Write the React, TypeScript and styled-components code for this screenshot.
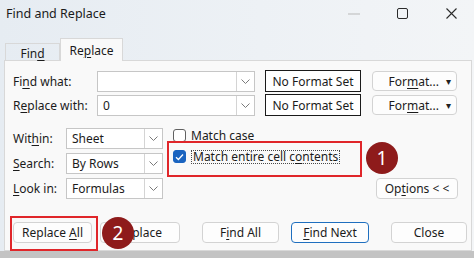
import React from "react";
import styled, { createGlobalStyle } from "styled-components";

const GlobalStyle = createGlobalStyle`
  body {
    margin: 0;
    font-family: "Noto Sans", "Open Sans", sans-serif;
    color: #1b1b1b;
  }
`;

const Chevron = () => (
  <svg width="9" height="5" viewBox="0 0 9 5">
    <polyline points="0.5,0.5 4.5,4.5 8.5,0.5" fill="none" stroke="#7a7a7a" strokeWidth="1" />
  </svg>
);

const Key = ({ children }: { children: React.ReactNode }) => <U>{children}</U>;

const App = () => {
  return (
    <>
      <GlobalStyle />
      <S.Window>
        <S.TitleBar>
          <S.Title>Find and Replace</S.Title>
          <S.Controls>
            <S.ControlButton>
              <svg width="12" height="2" viewBox="0 0 12 2">
                <line x1="0" y1="1" x2="12" y2="1" stroke="#b9b9b9" strokeWidth="1" />
              </svg>
            </S.ControlButton>
            <S.ControlButton>
              <svg width="11" height="11" viewBox="0 0 11 11">
                <rect x="0.5" y="0.5" width="10" height="10" rx="1.5" fill="none" stroke="#2b2b2b" strokeWidth="1" />
              </svg>
            </S.ControlButton>
            <S.ControlButton $shift={3}>
              <svg width="11" height="11" viewBox="0 0 11 11">
                <path d="M0.5 0.5 L10.5 10.5 M10.5 0.5 L0.5 10.5" stroke="#2b2b2b" strokeWidth="1.1" />
              </svg>
            </S.ControlButton>
          </S.Controls>
        </S.TitleBar>

        <S.TabStrip>
          <S.Tab>
            <span>Fin<Key>d</Key></span>
          </S.Tab>
          <S.Tab $active>
            <span>Re<Key>p</Key>lace</span>
          </S.Tab>
        </S.TabStrip>

        <S.Panel>
          <S.FindGrid>
            <S.Label>
              Fi<Key>n</Key>d what:
            </S.Label>
            <S.Combo>
              <S.ComboText></S.ComboText>
              <S.ComboArrow>
                <Chevron />
              </S.ComboArrow>
            </S.Combo>
            <S.FormatPreview>No Format Set</S.FormatPreview>
            <S.FormatButton>
              <span>
                For<Key>m</Key>at...
              </span>
              <S.Caret>▾</S.Caret>
            </S.FormatButton>

            <S.Label>
              R<Key>e</Key>place with:
            </S.Label>
            <S.Combo>
              <S.ComboText>0</S.ComboText>
              <S.ComboArrow>
                <Chevron />
              </S.ComboArrow>
            </S.Combo>
            <S.FormatPreview>No Format Set</S.FormatPreview>
            <S.FormatButton>
              <span>
                For<Key>m</Key>at...
              </span>
              <S.Caret>▾</S.Caret>
            </S.FormatButton>
          </S.FindGrid>

          <S.OptionsArea>
            <S.SelectGrid>
              <S.Label>
                Wit<Key>h</Key>in:
              </S.Label>
              <S.Select>
                <S.ComboText>Sheet</S.ComboText>
                <S.ComboArrow>
                  <Chevron />
                </S.ComboArrow>
              </S.Select>
              <S.Label>
                <Key>S</Key>earch:
              </S.Label>
              <S.Select>
                <S.ComboText>By Rows</S.ComboText>
                <S.ComboArrow>
                  <Chevron />
                </S.ComboArrow>
              </S.Select>
              <S.Label>
                <Key>L</Key>ook in:
              </S.Label>
              <S.Select>
                <S.ComboText>Formulas</S.ComboText>
                <S.ComboArrow>
                  <Chevron />
                </S.ComboArrow>
              </S.Select>
            </S.SelectGrid>

            <S.CheckColumn>
              <S.CheckRow>
                <S.Box />
                <span>
                  Match <Key>c</Key>ase
                </span>
              </S.CheckRow>
              <S.CheckRow>
                <S.Box $checked>
                  <svg width="9" height="8" viewBox="0 0 9 8">
                    <polyline points="1,4.2 3.4,6.5 8,1.5" fill="none" stroke="#fff" strokeWidth="1.3" />
                  </svg>
                </S.Box>
                <S.Focus>
                  Match entire cell c<Key>o</Key>ntents
                </S.Focus>
              </S.CheckRow>
            </S.CheckColumn>

            <S.Button $w={82} $ml={0} $push>
              <span>Op<Key>t</Key>ions &lt; &lt;</span>
            </S.Button>
          </S.OptionsArea>

          <S.ButtonRow>
            <S.Button $w={79} $ml={0}>
              <span>Replace <Key>A</Key>ll</span>
            </S.Button>
            <S.Button $w={80} $ml={8}>
              <span><Key>R</Key>eplace</span>
            </S.Button>
            <S.Button $w={77} $ml={22}>
              <span>F<Key>i</Key>nd All</span>
            </S.Button>
            <S.Button $w={78} $ml={12} $primary>
              <span><Key>F</Key>ind Next</span>
            </S.Button>
            <S.Button $w={76} $ml={22}>
              <span>Close</span>
            </S.Button>
          </S.ButtonRow>
        </S.Panel>
        <S.BottomEdge />

        <S.Highlight $x={167} $y={141} $w={195} $h={36} />
        <S.Badge $x={366} $y={142}>1</S.Badge>
        <S.Highlight $x={10} $y={216} $w={88} $h={35} />
        <S.Badge $x={102} $y={217}>2</S.Badge>
      </S.Window>
    </>
  );
};

export default App;

const U = styled.span`
  text-decoration: underline;
  text-underline-offset: 2px;
`;

const Window = styled.div`
  position: relative;
  width: 474px;
  height: 258px;
  overflow: hidden;
  display: flex;
  flex-direction: column;
  background: linear-gradient(90deg, #e6ecf2 0%, #edf1f5 55%, #f3f5f7 100%);
`;

const TitleBar = styled.div`
  height: 27px;
  display: flex;
  align-items: center;
  justify-content: space-between;
  padding-left: 6px;
`;

const Title = styled.span`
  font-size: 12.5px;
  color: #1a1a1a;
`;

const Controls = styled.div`
  display: flex;
  height: 27px;
`;

const ControlButton = styled.div<{ $shift?: number }>`
  width: 48px;
  display: flex;
  align-items: center;
  justify-content: center;
  padding-left: ${(p) => p.$shift ?? 0}px;
  box-sizing: border-box;
`;

const TabStrip = styled.div`
  height: 33px;
  display: flex;
  align-items: flex-end;
  padding-left: 5px;
  position: relative;
  z-index: 1;
`;

const Tab = styled.div<{ $active?: boolean }>`
  box-sizing: border-box;
  width: ${(p) => (p.$active ? 63 : 55)}px;
  height: ${(p) => (p.$active ? 23 : 17)}px;
  margin-bottom: ${(p) => (p.$active ? -1 : 0)}px;
  display: flex;
  align-items: center;
  justify-content: center;
  font-size: 12px;
  padding-top: ${(p) => (p.$active ? 0 : 3)}px;
  border: 1px solid #d8d8d8;
  border-bottom: none;
  background: ${(p) => (p.$active ? "#f9f9f9" : "transparent")};
`;

const Panel = styled.div`
  box-sizing: border-box;
  height: 191px;
  margin: 0 2px 0 4px;
  border: 1px solid #d8d8d8;
  background: #f9f9f9;
  padding: 9px 13px 0 8px;
  display: flex;
  flex-direction: column;
`;

const FindGrid = styled.div`
  display: grid;
  grid-template-columns: 74px 158px 96px 86px;
  grid-auto-rows: 22px;
  column-gap: 10px;
  row-gap: 2px;
  align-items: center;
`;

const Label = styled.span`
  font-size: 12px;
  white-space: nowrap;
`;

const Combo = styled.div`
  box-sizing: border-box;
  height: 21px;
  display: flex;
  background: #fff;
  border: 1px solid #c6c6c6;
`;

const Select = styled(Combo)`
  width: 97px;
`;

const ComboText = styled.span`
  flex: 1;
  font-size: 12px;
  padding-left: 5px;
  line-height: 19px;
`;

const ComboArrow = styled.span`
  width: 17px;
  border-left: 1px solid #d4d4d4;
  display: flex;
  align-items: center;
  justify-content: center;
`;

const FormatPreview = styled.div`
  box-sizing: border-box;
  height: 22px;
  border: 1px solid #1a1a1a;
  background: #fff;
  font-size: 12px;
  display: flex;
  align-items: center;
  justify-content: center;
`;

const FormatButton = styled.div`
  box-sizing: border-box;
  height: 20px;
  margin-left: 1px;
  border: 1px solid #d3d3d3;
  border-radius: 4px;
  background: #fdfdfd;
  font-size: 12px;
  display: flex;
  align-items: center;
  justify-content: flex-end;
  padding-right: 5px;
  gap: 7px;
`;

const Caret = styled.span`
  font-size: 10px;
  color: #222;
`;

const OptionsArea = styled.div`
  display: flex;
  margin-top: 12px;
  align-items: flex-start;
`;

const SelectGrid = styled.div`
  display: grid;
  grid-template-columns: 53px 97px;
  grid-auto-rows: 21px;
  row-gap: 4px;
  align-items: center;
`;

const CheckColumn = styled.div`
  display: flex;
  flex-direction: column;
  margin-left: 10px;
  margin-top: -3px;
`;

const CheckRow = styled.div`
  height: 21px;
  display: flex;
  align-items: center;
  gap: 5px;
  font-size: 12px;
`;

const Box = styled.span<{ $checked?: boolean }>`
  box-sizing: border-box;
  width: 13px;
  height: 13px;
  border-radius: 3px;
  border: 1px solid ${(p) => (p.$checked ? "#1a64c0" : "#616161")};
  background: ${(p) => (p.$checked ? "#1a64c0" : "#fff")};
  display: flex;
  align-items: center;
  justify-content: center;
`;

const Focus = styled.span`
  border: 1px dotted #4a4a4a;
  padding: 0 1px;
  line-height: 12px;
`;

const Button = styled.div<{ $w: number; $ml: number; $primary?: boolean; $push?: boolean }>`
  box-sizing: border-box;
  flex: none;
  width: ${(p) => p.$w}px;
  height: 21px;
  margin-left: ${(p) => (p.$push ? "auto" : `${p.$ml}px`)};
  align-self: ${(p) => (p.$push ? "flex-end" : "auto")};
  border: 1px solid ${(p) => (p.$primary ? "#1f6fbf" : "#d3d3d3")};
  border-radius: 4px;
  background: #fdfdfd;
  font-size: 12px;
  display: flex;
  align-items: center;
  justify-content: center;
  white-space: pre;
`;

const ButtonRow = styled.div`
  display: flex;
  margin-top: 23px;
`;

const BottomEdge = styled.div`
  flex: 1;
  background: #c3c3c3;
`;

const Highlight = styled.div<{ $x: number; $y: number; $w: number; $h: number }>`
  position: absolute;
  left: ${(p) => p.$x}px;
  top: ${(p) => p.$y}px;
  width: ${(p) => p.$w}px;
  height: ${(p) => p.$h}px;
  box-sizing: border-box;
  border: 2px solid #e0262a;
`;

const Badge = styled.div<{ $x: number; $y: number }>`
  position: absolute;
  left: ${(p) => p.$x}px;
  top: ${(p) => p.$y}px;
  width: 32px;
  height: 32px;
  border-radius: 50%;
  background: #8e1b1b;
  color: #fff;
  font-size: 19px;
  display: flex;
  align-items: center;
  justify-content: center;
`;

const S = {
  Window,
  TitleBar,
  Title,
  Controls,
  ControlButton,
  TabStrip,
  Tab,
  Panel,
  FindGrid,
  Label,
  Combo,
  Select,
  ComboText,
  ComboArrow,
  FormatPreview,
  FormatButton,
  Caret,
  OptionsArea,
  SelectGrid,
  CheckColumn,
  CheckRow,
  Box,
  Focus,
  Button,
  ButtonRow,
  BottomEdge,
  Highlight,
  Badge,
};
